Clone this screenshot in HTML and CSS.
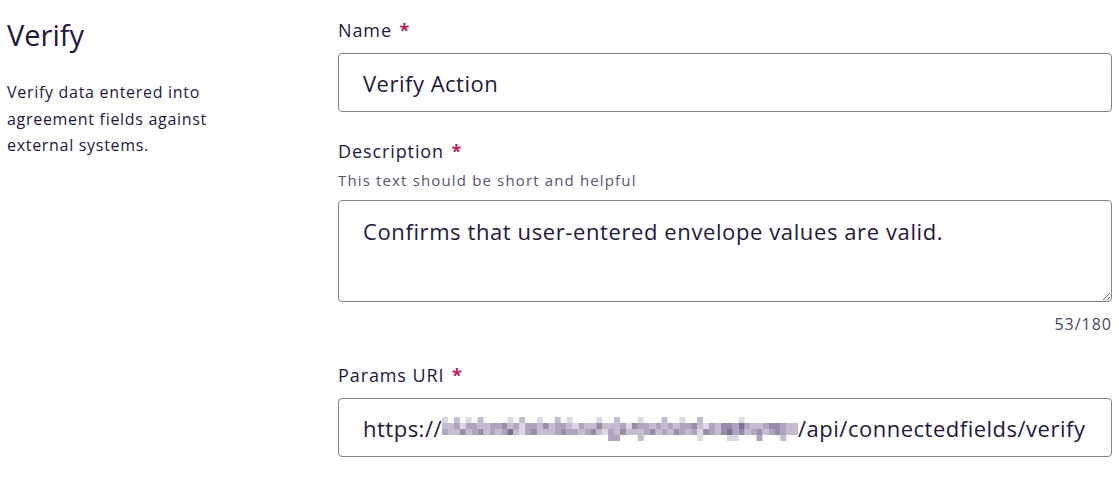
FILE: index.html
```html
<!DOCTYPE html>
<html lang="en">
<head>
<meta charset="utf-8">
<title>Verify</title>
<link rel="stylesheet" href="styles.css">
</head>
<body>
<div class="page">
  <section class="intro">
    <h1 class="intro-title">Verify</h1>
    <p class="intro-text">Verify data entered into agreement fields against external systems.</p>
  </section>
  <form class="form">
    <div class="field field-name">
      <label class="label" for="name">Name <span class="req">*</span></label>
      <input class="control" id="name" type="text" value="Verify Action">
    </div>
    <div class="field field-desc">
      <label class="label" for="desc">Description <span class="req">*</span></label>
      <div class="hint">This text should be short and helpful</div>
      <textarea class="control textarea" id="desc">Confirms that user-entered envelope values are valid.</textarea>
      <div class="counter">53/180</div>
    </div>
    <div class="field field-uri">
      <div class="label">Params URI <span class="req">*</span></div>
      <div class="control uri"><span>https://</span><svg class="blur" width="356" height="24" viewBox="0 0 360 24" preserveAspectRatio="none" aria-hidden="true">
        <g fill="#dcd9e3">
          <rect x="0" y="0" width="6" height="6"/><rect x="24" y="0" width="6" height="6"/><rect x="66" y="0" width="6" height="6"/><rect x="96" y="0" width="6" height="6"/><rect x="126" y="0" width="6" height="6"/><rect x="156" y="0" width="6" height="6"/><rect x="198" y="0" width="6" height="6"/><rect x="240" y="0" width="6" height="6"/><rect x="300" y="0" width="6" height="6"/>
          <rect x="18" y="6" width="6" height="6"/><rect x="78" y="6" width="6" height="6"/><rect x="132" y="6" width="6" height="6"/><rect x="186" y="6" width="6" height="6"/><rect x="264" y="6" width="6" height="6"/>
          <rect x="78" y="12" width="6" height="6"/><rect x="162" y="12" width="6" height="6"/><rect x="258" y="12" width="6" height="6"/>
          <rect x="258" y="18" width="6" height="6"/><rect x="288" y="18" width="12" height="6"/>
        </g>
        <g fill="#c3bdcf">
          <rect x="12" y="0" width="6" height="6"/><rect x="36" y="0" width="6" height="6"/><rect x="78" y="0" width="6" height="6"/><rect x="114" y="0" width="6" height="6"/><rect x="174" y="0" width="6" height="6"/><rect x="222" y="0" width="6" height="6"/><rect x="258" y="0" width="6" height="6"/>
          <rect x="0" y="6" width="12" height="6"/><rect x="36" y="6" width="12" height="6"/><rect x="66" y="6" width="6" height="6"/><rect x="96" y="6" width="6" height="6"/><rect x="108" y="6" width="6" height="6"/><rect x="126" y="6" width="6" height="6"/><rect x="144" y="6" width="12" height="6"/><rect x="162" y="6" width="6" height="6"/><rect x="168" y="6" width="12" height="6"/><rect x="210" y="6" width="6" height="6"/><rect x="222" y="6" width="6" height="6"/><rect x="234" y="6" width="6" height="6"/><rect x="258" y="6" width="6" height="6"/><rect x="276" y="6" width="6" height="6"/><rect x="312" y="6" width="12" height="6"/><rect x="348" y="6" width="12" height="6"/>
          <rect x="6" y="12" width="12" height="6"/><rect x="24" y="12" width="6" height="6"/><rect x="42" y="12" width="6" height="6"/><rect x="54" y="12" width="6" height="6"/><rect x="72" y="12" width="6" height="6"/><rect x="96" y="12" width="18" height="6"/><rect x="138" y="12" width="6" height="6"/><rect x="156" y="12" width="6" height="6"/><rect x="174" y="12" width="6" height="6"/><rect x="186" y="12" width="18" height="6"/><rect x="216" y="12" width="6" height="6"/><rect x="228" y="12" width="6" height="6"/><rect x="246" y="12" width="6" height="6"/><rect x="276" y="12" width="6" height="6"/><rect x="306" y="12" width="6" height="6"/><rect x="324" y="12" width="6" height="6"/><rect x="348" y="12" width="12" height="6"/>
          <rect x="198" y="18" width="6" height="6"/><rect x="342" y="18" width="6" height="6"/>
        </g>
        <g fill="#aca5bd">
          <rect x="12" y="6" width="6" height="6"/><rect x="24" y="6" width="12" height="6"/><rect x="48" y="6" width="12" height="6"/><rect x="72" y="6" width="6" height="6"/><rect x="84" y="6" width="12" height="6"/><rect x="114" y="6" width="12" height="6"/><rect x="138" y="6" width="6" height="6"/><rect x="180" y="6" width="6" height="6"/><rect x="198" y="6" width="12" height="6"/><rect x="216" y="6" width="6" height="6"/><rect x="228" y="6" width="6" height="6"/><rect x="240" y="6" width="12" height="6"/><rect x="270" y="6" width="6" height="6"/><rect x="294" y="6" width="6" height="6"/><rect x="306" y="6" width="6" height="6"/><rect x="324" y="6" width="6" height="6"/><rect x="342" y="6" width="6" height="6"/>
          <rect x="0" y="12" width="6" height="6"/><rect x="30" y="12" width="6" height="6"/><rect x="48" y="12" width="6" height="6"/><rect x="60" y="12" width="6" height="6"/><rect x="84" y="12" width="6" height="6"/><rect x="114" y="12" width="6" height="6"/><rect x="126" y="12" width="12" height="6"/><rect x="144" y="12" width="6" height="6"/><rect x="168" y="12" width="6" height="6"/><rect x="204" y="12" width="6" height="6"/><rect x="222" y="12" width="6" height="6"/><rect x="240" y="12" width="6" height="6"/><rect x="252" y="12" width="6" height="6"/><rect x="270" y="12" width="6" height="6"/><rect x="294" y="12" width="6" height="6"/><rect x="312" y="12" width="6" height="6"/><rect x="330" y="12" width="6" height="6"/><rect x="342" y="12" width="6" height="6"/>
          <rect x="168" y="18" width="12" height="6"/><rect x="318" y="18" width="6" height="6"/>
        </g>
        <g fill="#968ea9">
          <rect x="60" y="6" width="6" height="6"/><rect x="102" y="6" width="6" height="6"/><rect x="156" y="6" width="6" height="6"/><rect x="192" y="6" width="6" height="6"/><rect x="252" y="6" width="6" height="6"/><rect x="282" y="6" width="12" height="6"/><rect x="330" y="6" width="12" height="6"/>
          <rect x="18" y="12" width="6" height="6"/><rect x="36" y="12" width="6" height="6"/><rect x="90" y="12" width="6" height="6"/><rect x="120" y="12" width="6" height="6"/><rect x="150" y="12" width="6" height="6"/><rect x="180" y="12" width="6" height="6"/><rect x="210" y="12" width="6" height="6"/><rect x="234" y="12" width="6" height="6"/><rect x="264" y="12" width="6" height="6"/><rect x="282" y="12" width="6" height="6"/><rect x="300" y="12" width="6" height="6"/><rect x="318" y="12" width="6" height="6"/><rect x="336" y="12" width="6" height="6"/>
        </g>
        <g fill="#7a7292">
          <rect x="300" y="6" width="6" height="6"/><rect x="66" y="12" width="6" height="6"/><rect x="288" y="12" width="6" height="6"/>
        </g>
      </svg><span>/api/connectedfields/verify</span></div>
    </div>
  </form>
</div>
</body>
</html>
```
FILE: styles.css
```css
* { box-sizing: border-box; }

html, body {
  margin: 0;
  padding: 0;
  background: #ffffff;
}

body {
  font-family: "Open Sans", "Liberation Sans", sans-serif;
  color: #1f1742;
}

.page {
  display: grid;
  grid-template-columns: 331px 1fr;
  padding: 0 7px;
}

.intro-title {
  margin: 17px 0 0;
  font-size: 29px;
  line-height: 36px;
  font-weight: 500;
  color: #1f1742;
}

.intro-text {
  margin: 26px 0 0;
  max-width: 230px;
  font-size: 16px;
  line-height: 26.5px;
  font-weight: 500;
  letter-spacing: 0.7px;
  color: #1f1742;
}

.form {
  display: flex;
  flex-direction: column;
  padding-top: 18px;
}

.field {
  display: flex;
  flex-direction: column;
}

.field-name { margin-bottom: 27px; }
.field-desc { margin-bottom: 28px; }

.label {
  display: block;
  font-size: 18px;
  line-height: 24px;
  font-weight: 500;
  letter-spacing: 0.9px;
  color: #1f1742;
  margin-bottom: 11px;
}

.field-desc .label { margin-bottom: 7px; }

.req {
  color: #cc1458;
  font-weight: 700;
  margin-left: 2px;
}

.hint {
  font-size: 15px;
  line-height: 20px;
  font-weight: 500;
  letter-spacing: 1.15px;
  color: #5a5370;
  margin-bottom: 10px;
}

.control {
  display: block;
  width: 100%;
  height: 59px;
  border: 1px solid #857e99;
  border-radius: 4px;
  padding: 0 24px;
  font-family: "Open Sans", "Liberation Sans", sans-serif;
  font-size: 22px;
  letter-spacing: 0.5px;
  color: #1f1742;
  background: #ffffff;
  outline: none;
}

.textarea {
  height: 102px;
  padding: 15px 24px;
  line-height: 30px;
  letter-spacing: 0.6px;
  resize: vertical;
}

.counter {
  align-self: flex-end;
  margin-top: 11px;
  font-size: 16px;
  line-height: 22px;
  font-weight: 500;
  letter-spacing: 1px;
  color: #4b4560;
}

.uri {
  display: flex;
  align-items: center;
  white-space: nowrap;
  overflow: hidden;
}

.blur {
  display: block;
  flex: none;
  margin-top: 2px;
}
```
